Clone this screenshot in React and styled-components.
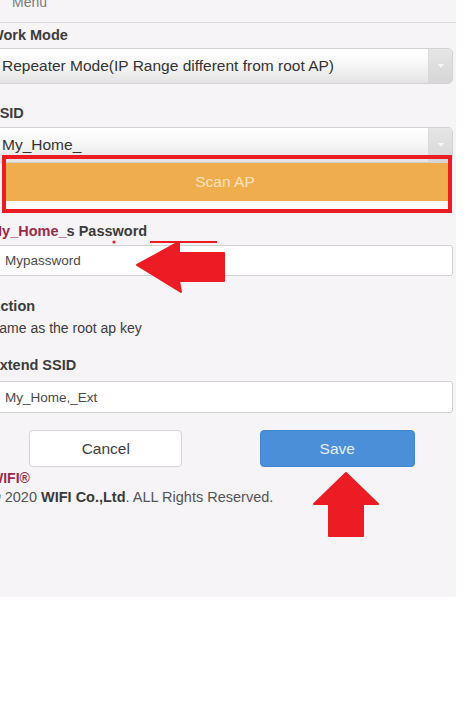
import React from 'react';
import styled, { createGlobalStyle } from 'styled-components';

const GlobalStyle = createGlobalStyle`
  html, body {
    margin: 0;
    padding: 0;
    background: #ffffff;
  }
  body {
    font-family: 'Liberation Sans', Arial, sans-serif;
  }
`;

const colors = {
  screen: '#f6f4f7',
  text: '#3c3c3c',
  muted: '#7a7a7a',
  accent: '#9a2c4a',
  border: '#d2d2d2',
  orange: '#f0ad4e',
  blue: '#4a8fd7',
  mark: '#ec1c24'
};

const Screen = styled.div`
  position: relative;
  width: 456px;
  height: 597px;
  background: ${colors.screen};
  overflow: hidden;
`;

// flow-root keeps the title's pull-up inside the bar
const TopBar = styled.div`
  display: flow-root;
  height: 22px;
  border-bottom: 1px solid #dcdadd;
  padding-left: 12px;
`;

const MenuTitle = styled.div`
  margin-top: -6px;
  font-size: 14px;
  line-height: 16px;
  color: ${colors.muted};
`;

const Form = styled.div`
  margin-left: -10px;
  width: 463px;
`;

const FieldLabel = styled.div`
  margin-top: ${p => p.$mt || 0}px;
  font-size: 14.5px;
  line-height: 18px;
  font-weight: bold;
  color: ${colors.text};
  white-space: nowrap;
`;

const Accent = styled.span`
  color: ${colors.accent};
`;

const Note = styled.div`
  margin-top: 4px;
  font-size: 14px;
  line-height: 18px;
  color: ${colors.text};
`;

const Select = styled.div`
  margin-top: ${p => p.$mt || 0}px;
  height: 36px;
  box-sizing: border-box;
  display: flex;
  align-items: center;
  border: 1px solid ${colors.border};
  border-radius: 5px;
  background: linear-gradient(#ffffff 0%, #f7f7f7 45%, #e3e3e3 100%);
  overflow: hidden;
`;

const SelectValue = styled.div`
  flex: 1;
  padding-left: 11px;
  font-size: 15.5px;
  color: #333;
  white-space: nowrap;
`;

const Caret = styled.div`
  width: 23px;
  align-self: stretch;
  display: flex;
  align-items: center;
  justify-content: center;
  background: linear-gradient(#e6e6e6, #d6d6d6);
  border-left: 1px solid #d9d9d9;

  &::after {
    content: '';
    border-left: 3px solid transparent;
    border-right: 3px solid transparent;
    border-top: 4px solid #f7f7f7;
  }
`;

const ScanButton = styled.div`
  height: 38px;
  margin-left: 12px;
  margin-right: 5px;
  display: flex;
  align-items: center;
  justify-content: center;
  background: ${colors.orange};
  border-bottom: 8px solid #fcfaf7;
  font-size: 15.5px;
  color: #fde2bd;
`;

const TextInput = styled.input`
  display: block;
  margin: ${p => p.$mt || 0}px 0 0;
  width: 100%;
  height: ${p => p.$h || 32}px;
  box-sizing: border-box;
  padding: 0 0 0 14px;
  border: 1px solid ${colors.border};
  border-radius: 3px;
  background: #ffffff;
  font-family: inherit;
  font-size: 13.5px;
  color: #4a4a4a;
  outline: none;
`;

const ButtonRow = styled.div`
  margin-top: 17px;
  display: grid;
  grid-template-columns: 1fr 1fr;
  justify-items: center;
`;

const Button = styled.div`
  width: ${p => (p.$primary ? 155 : 153)}px;
  height: 37px;
  box-sizing: border-box;
  display: flex;
  align-items: center;
  justify-content: center;
  border-radius: 4px;
  font-size: 15.5px;
  border: 1px solid ${p => (p.$primary ? '#3f84cf' : '#d4d4d4')};
  background: ${p => (p.$primary ? colors.blue : '#ffffff')};
  color: ${p => (p.$primary ? '#e4eef9' : '#404040')};
`;

const Brand = styled.div`
  margin-top: 2px;
  font-size: 14px;
  line-height: 18px;
  font-weight: bold;
  color: ${colors.accent};
`;

const Copyright = styled.div`
  margin-top: 1px;
  font-size: 14.5px;
  line-height: 18px;
  color: #555;
  white-space: nowrap;

  b {
    color: #3a3a3a;
  }
`;

const Marks = styled.svg`
  position: absolute;
  left: 0;
  top: 0;
  pointer-events: none;
`;

const Annotations = () => (
  <Marks width="456" height="597" viewBox="0 0 456 597">
    <rect x="4" y="157" width="446" height="54" fill="none" stroke={colors.mark} strokeWidth="4" />
    <rect x="150" y="241" width="67" height="2" fill={colors.mark} />
    <circle cx="114" cy="242" r="1.6" fill={colors.mark} />
    <polygon
      points="137,265 179,242 179,253 224,253 224,281 179,281 181,292"
      fill={colors.mark}
      stroke={colors.mark}
      strokeWidth="2"
      strokeLinejoin="round"
    />
    <polygon
      points="346,473 378,504 363,504 363,536 329,536 329,504 314,504"
      fill={colors.mark}
      stroke={colors.mark}
      strokeWidth="2"
      strokeLinejoin="round"
    />
  </Marks>
);

const App = () => (
  <>
    <GlobalStyle />
    <Screen>
      <TopBar>
        <MenuTitle>Menu</MenuTitle>
      </TopBar>
      <Form>
        <FieldLabel $mt={3}>Work Mode</FieldLabel>
        <Select $mt={4}>
          <SelectValue>Repeater Mode(IP Range different from root AP)</SelectValue>
          <Caret />
        </Select>

        <FieldLabel $mt={20}>SSID</FieldLabel>
        <Select $mt={5}>
          <SelectValue>My_Home_</SelectValue>
          <Caret />
        </Select>
        <ScanButton>Scan AP</ScanButton>

        <FieldLabel $mt={13}>
          <Accent>My_Home_</Accent>s Password
        </FieldLabel>
        <TextInput $mt={5} $h={31} defaultValue="Mypassword" readOnly />

        <FieldLabel $mt={21}>Action</FieldLabel>
        <Note>Same as the root ap key</Note>

        <FieldLabel $mt={19}>Extend SSID</FieldLabel>
        <TextInput $mt={7} $h={32} defaultValue="My_Home,_Ext" readOnly />

        <ButtonRow>
          <Button>Cancel</Button>
          <Button $primary>Save</Button>
        </ButtonRow>

        <Brand>WIFI®</Brand>
        <Copyright>
          © 2020 <b>WIFI Co.,Ltd</b>. ALL Rights Reserved.
        </Copyright>
      </Form>
      <Annotations />
    </Screen>
  </>
);

export default App;
